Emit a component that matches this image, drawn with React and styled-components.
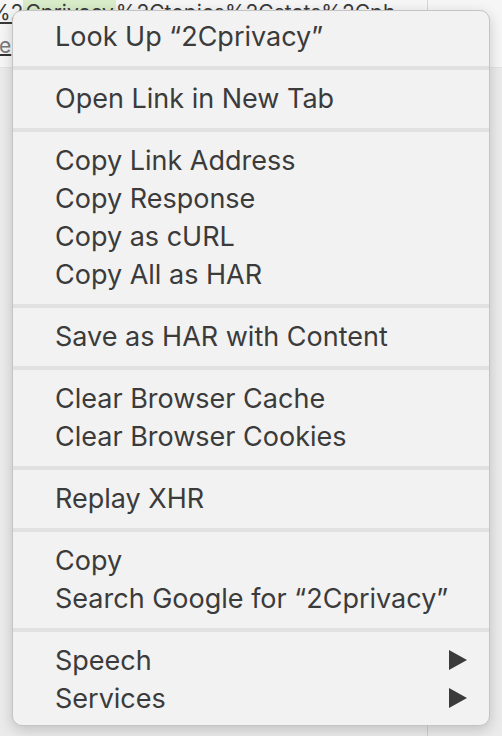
import React from 'react'
import styled, { createGlobalStyle } from 'styled-components'

const GlobalStyle = createGlobalStyle`
  html, body {
    margin: 0;
    padding: 0;
    width: 502px;
    height: 736px;
    overflow: hidden;
    background: #ececec;
    font-family: Inter, "Liberation Sans", sans-serif;
  }
`

const groups = [
  [{ label: 'Look Up “2Cprivacy”' }],
  [{ label: 'Open Link in New Tab' }],
  [
    { label: 'Copy Link Address' },
    { label: 'Copy Response' },
    { label: 'Copy as cURL' },
    { label: 'Copy All as HAR' },
  ],
  [{ label: 'Save as HAR with Content' }],
  [{ label: 'Clear Browser Cache' }, { label: 'Clear Browser Cookies' }],
  [{ label: 'Replay XHR' }],
  [{ label: 'Copy' }, { label: 'Search Google for “2Cprivacy”' }],
  [
    { label: 'Speech', submenu: true },
    { label: 'Services', submenu: true },
  ],
]

function Arrow() {
  return (
    <svg width="18" height="20" viewBox="0 0 18 20">
      <path d="M0 0 L18 10 L0 20 Z" fill="#3b3b3b" />
    </svg>
  )
}

function App() {
  return (
    <>
      <GlobalStyle />
      <Page>
        <TopStrip>
          <UrlLine>
            %2<Highlight>Cprivacy</Highlight>%2Ctopics%2Cstats%2Cph
          </UrlLine>
          <LinkStub>e</LinkStub>
        </TopStrip>
        <Lower />
        <Menu>
          {groups.map((items, gi) => (
            <Group key={gi}>
              {items.map((item) => (
                <Item key={item.label}>
                  <span>{item.label}</span>
                  {item.submenu && <Arrow />}
                </Item>
              ))}
            </Group>
          ))}
        </Menu>
      </Page>
    </>
  )
}

export default App

const Page = styled.div`
  position: relative;
  width: 502px;
  height: 736px;
  display: flex;
  flex-direction: column;
`

const TopStrip = styled.div`
  height: 68px;
  box-sizing: border-box;
  padding-top: 2px;
  display: flex;
  flex-direction: column;
  gap: 12px;
  background: #f6f6f6;
  border-bottom: 1px solid #e2e2e2;
  overflow: hidden;
  background-image: linear-gradient(#d6d6d6, #d6d6d6);
  background-size: 1px 12px;
  background-position: 427px 0;
  background-repeat: no-repeat;
`

const UrlLine = styled.div`
  margin-left: -10px;
  font-size: 21px;
  line-height: 21px;
  color: #3a3a3a;
  white-space: nowrap;
  text-decoration: underline;
  text-underline-offset: 2px;
`

const Highlight = styled.span`
  background: #d8ecc9;
  padding: 0 2px;
`

const LinkStub = styled.div`
  margin-left: -1px;
  font-size: 21px;
  line-height: 21px;
  color: #7a7a7a;
  text-decoration: underline;
  text-decoration-color: #333;
  text-decoration-thickness: 2px;
`

const Lower = styled.div`
  flex: 1;
  background: #ebebeb;
  background-image: linear-gradient(#d0d0d0, #d0d0d0);
  background-size: 1px 20px;
  background-position: 427px 100%;
  background-repeat: no-repeat;
`

const Menu = styled.div`
  position: absolute;
  left: 12px;
  top: 10px;
  width: 476px;
  background: #f2f2f2;
  border: 1px solid #c4c4c4;
  border-radius: 10px;
  box-shadow: 0 4px 14px rgba(0, 0, 0, 0.18);
  overflow: hidden;
`

const Group = styled.div`
  padding: 10px 0;
  & + & {
    border-top: 4px solid #e1e1e1;
  }
  &:first-child {
    padding-top: 7px;
  }
  &:last-child {
    padding-bottom: 7px;
  }
`

const Item = styled.div`
  box-sizing: border-box;
  height: 38px;
  padding: 0 22px 2px 42px;
  display: flex;
  align-items: center;
  justify-content: space-between;
  font-size: 27px;
  color: #3b3b3b;
  white-space: nowrap;
`
